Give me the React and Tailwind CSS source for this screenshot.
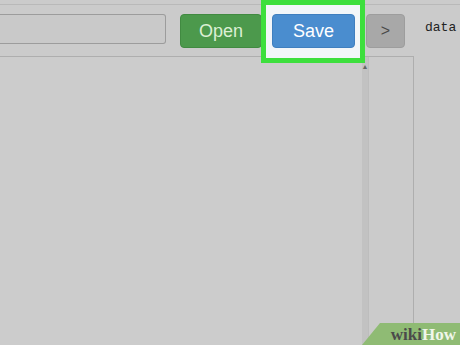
import React from 'react';

const App = () => {
    return (
        <div className="w-[460px] h-[345px] bg-[#cbcbcb] relative overflow-hidden flex flex-col"
            style={{ fontFamily: '"Liberation Sans", Arial, sans-serif' }}>

            {/* ── Toolbar ── */}
            <div className="mt-[4px] h-[52px] border-t border-[#b9b9b9] shrink-0">
                <div className="flex items-start pt-[9px]">
                    <div className="w-[166px] h-[30px] border border-l-0 border-[#9c9c9c] rounded-r-[3px] bg-[#c9c9c9] shrink-0" />

                    <button className="ml-[14px] w-[82px] h-[34px] rounded-[4px] bg-[#4c994c] border border-[#418a41] text-[18px] text-[#dcefd4] flex items-center justify-center shrink-0">
                        Open
                    </button>

                    {/* highlight around Save */}
                    <div className="relative z-10 -ml-px -mt-[14px] w-[104px] h-[63px] border-[5px] border-[#3ddf3d] bg-[#f2f6f9] pt-[9px] pl-[6px] shrink-0">
                        <button className="w-[83px] h-[34px] rounded-[4px] bg-[#4a8dcf] border border-[#3f7fbf] text-[18px] text-white flex items-center justify-center">
                            Save
                        </button>
                    </div>

                    <button className="ml-px w-[39px] h-[34px] rounded-[4px] bg-[#a8a8a8] border border-[#9d9d9d] text-[16px] text-[#4a4a4a] flex items-center justify-center shrink-0">
                        &gt;
                    </button>

                    <span className="ml-[20px] mt-[4px] text-[13px] text-[#222]"
                        style={{ fontFamily: '"Liberation Mono", "DejaVu Sans Mono", monospace' }}>
                        data
                    </span>
                </div>
            </div>

            {/* ── Editor panel ── */}
            <div className="flex-1 w-[414px] border-t border-r border-[#aeaeae] flex">
                <div className="w-[362px] bg-[#cccccc]" />
                <div className="w-[6px] bg-[#c2c2c2] flex justify-center pt-[6px]">
                    <span className="text-[7px] leading-none text-[#666]">▲</span>
                </div>
                <div className="flex-1 border-l border-[#bdbdbd] bg-[#cbcbcb]" />
            </div>

            {/* ── wikiHow badge ── */}
            <div className="absolute right-0 bottom-0 w-[98px] h-[22px] bg-[#8fbb74] flex items-center justify-end pr-[4px]"
                style={{ clipPath: 'polygon(18px 0, 100% 0, 100% 100%, 0 100%)' }}>
                <span className="text-[17px] font-bold leading-none text-[#4b4b4b]"
                    style={{ fontFamily: '"Liberation Serif", "Times New Roman", serif' }}>
                    wiki<span className="text-[#f0f6ea]">How</span>
                </span>
            </div>
        </div>
    );
};

export default App;
